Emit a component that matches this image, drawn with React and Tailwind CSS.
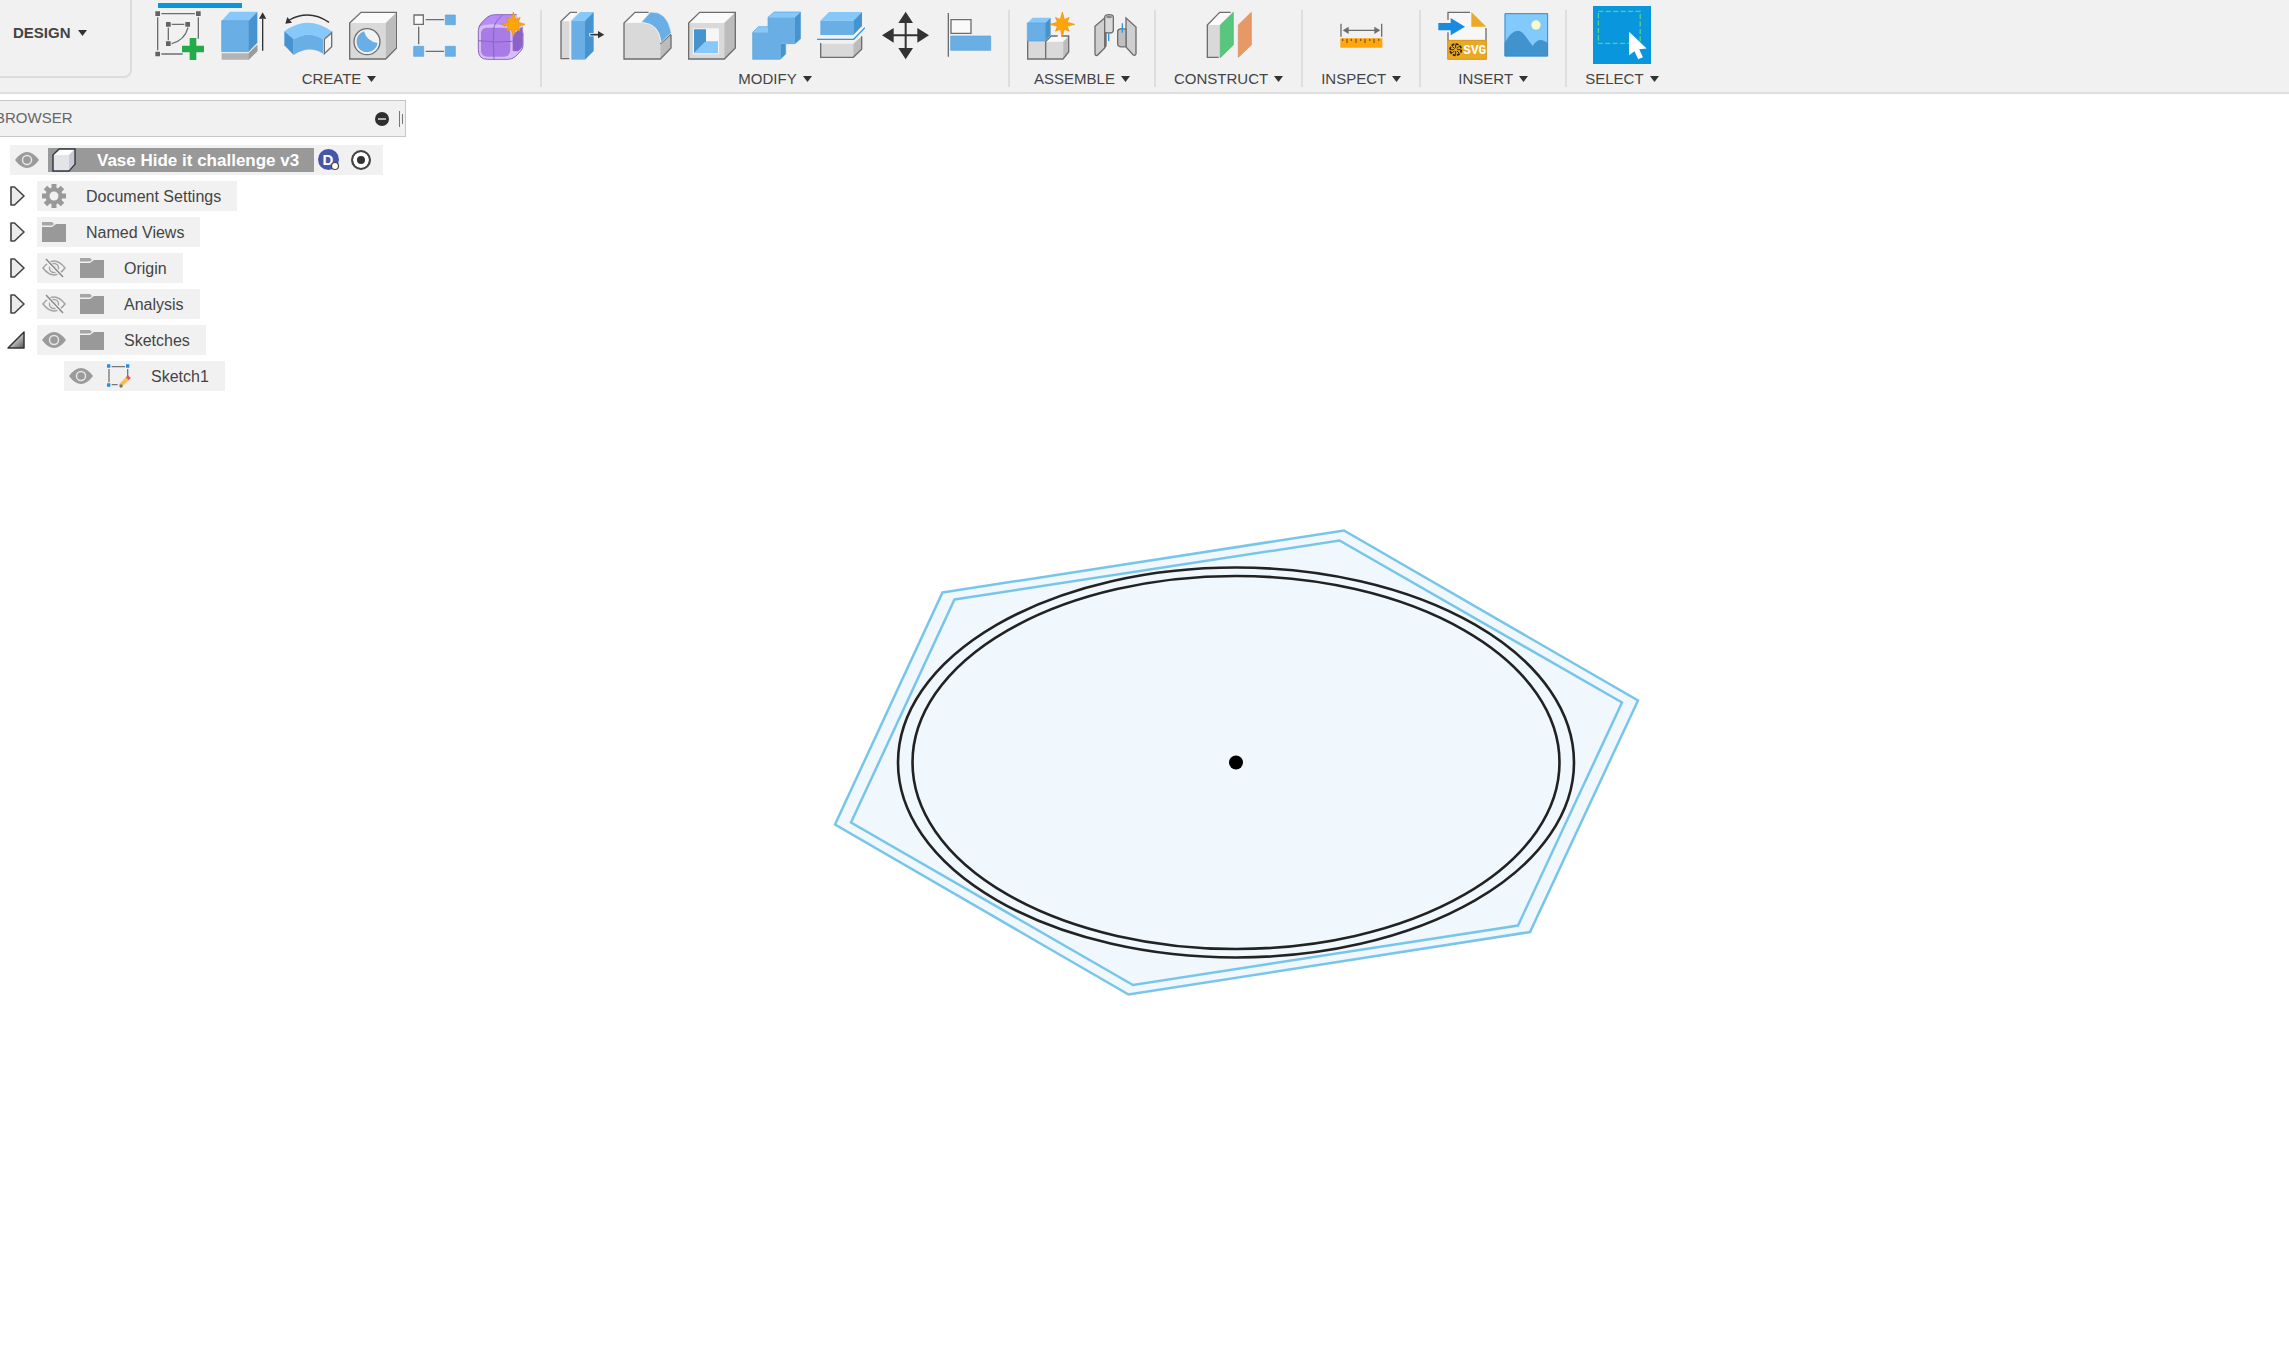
import React, { useState } from 'react';
import clsx from 'clsx';

const INK = '#6e6e6e';
const BLUE = '#69afe5';
const BLUE_LIGHT = '#87c8fb';
const BLUE_DARK = '#4694cf';

function Tool({ label, x, children }) {
  return (
    <button type="button" aria-label={label} className="shrink-0">
      <svg viewBox={`${x} 30 156 150`} width="52" height="50" fill="none" className="block">
        {children}
      </svg>
    </button>
  );
}

function Caret() {
  return (
    <svg viewBox="0 0 9 6" width="9" height="6" fill="#333" className="block">
      <path d="M0 0h9L4.500 6z" />
    </svg>
  );
}

function Group({ name, className, children }) {
  return (
    <div className={clsx('flex flex-col items-center gap-[9px] pt-2.5', className)}>
      <div className="flex h-[50px] items-center gap-3">{children}</div>
      <button type="button" className="flex items-center gap-1.5 text-[15px] leading-5">
        {name} <Caret />
      </button>
    </div>
  );
}

function Separator() {
  return <div className="mt-2.5 h-[77px] w-0.5 shrink-0 bg-[#dedede]" />;
}

function Spark({ cx, cy }) {
  const points = Array.from({ length: 16 }, (_, i) => {
    const r = i % 2 ? 16 : i % 4 ? 29 : 37;
    const a = (i * Math.PI) / 8;
    return `${cx + r * Math.sin(a)},${cy - r * Math.cos(a)}`;
  }).join(' ');
  return <polygon points={points} fill="#ffa50a" stroke="#e09112" strokeWidth="2" />;
}

function CreateTools() {
  return (
    <>
      <Tool label="Create Sketch" x={459}>
        <path d="M484 41h101M473 52v99M484 162h64M595 52v64" stroke={INK} strokeWidth="4" />
        <path d="M515 73h38M505 83v38M564 83q-10 38-49 48" stroke={INK} strokeWidth="4" />
        <path d="M466 34h14v14h-14zM588 34h14v14h-14zM466 155h14v14h-14zM498 66h14v14h-14zM556 66h14v14h-14zM498 124h14v14h-14z" fill="#636363" />
        <path d="M569 114h20v23h23v20h-23v23h-20v-23h-23v-20h23z" fill="#23ab4b" />
      </Tool>
      <Tool label="Extrude" x={651}>
        <path d="M665 160h81l26-26v20l-26 25h-81z" fill="#b3b3b3" />
        <path d="M746 160l26-26v20l-26 25z" fill="#9a9a9a" />
        <path d="M665 62l25-27h82l-26 27z" fill={BLUE_LIGHT} />
        <path d="M665 62h81v93h-81z" fill={BLUE} stroke="#5aa2da" strokeWidth="2" />
        <path d="M746 62l26-27v93l-26 27z" fill={BLUE_DARK} />
        <path d="M788 56v96" stroke="#333" strokeWidth="4" />
        <path d="M788 37l11 19h-22z" fill="#333" />
      </Tool>
      <Tool label="Revolve" x={33}>
        <path d="M177 67Q118 27 58 60" stroke="#333" strokeWidth="4" />
        <path d="M46 71l6-20 14 17z" fill="#333" />
        <path d="M43 94Q113 42 187 95l-28 23q-42-27-88 0z" fill={BLUE_LIGHT} />
        <path d="M43 94l28 24v47l-28-29z" fill={BLUE_DARK} />
        <path d="M71 118q46-27 88 0v43q-42-27-88 4z" fill={BLUE} />
        <path d="M163 118l22-20v42l-22 21z" fill="#f5f5f5" stroke={INK} strokeWidth="4" />
      </Tool>
      <Tool label="Hole" x={225}>
        <path d="M239 69l34-32h107l-33 32z" fill="#fafafa" />
        <path d="M239 69h108v108H239z" fill="#d9d9d9" />
        <path d="M347 69l33-32v107l-33 33z" fill="#bcbcbc" />
        <path d="M239 69l34-32h107v107l-33 33H239z" stroke={INK} strokeWidth="4" />
        <circle cx="291" cy="125" r="39" fill="#f3f3f3" stroke={INK} strokeWidth="4" />
        <path d="M282 94a32 32 0 1 0 41 35q-32-4-41-35z" fill={BLUE} />
      </Tool>
      <Tool label="Rectangular Pattern" x={417}>
        <path d="M467 59h55M446 80v53M467 154h55" stroke={INK} strokeWidth="4" />
        <path d="M432 45h28v28h-28z" fill="#fafafa" stroke={INK} strokeWidth="4" />
        <path d="M526 45h30v29h-30zM431 139h30v30h-30zM526 139h30v30h-30z" fill={BLUE} stroke="#5aa2da" strokeWidth="2" />
      </Tool>
      <Tool label="Create Form" x={609}>
        <path d="M625 92q0-15 12-26l13-13q11-9 24-9h66l19 54v39q0 9-7 16l-16 17q-9 8-23 8h-61q-27 0-27-29z" fill="#d5bdf8" />
        <path d="M626 82q2-9 11-17l14-13q9-7 22-7h55l-24 35q-11-8-34-7-33 0-44 9z" fill="#b78cf5" />
        <path d="M633 101q0-18 18-18h50q20 0 20 18v47q0 22-22 22h-46q-20 0-20-20z" fill="#a87be6" />
        <path d="M728 105l30-26v55q-2 12-15 20l-15-1z" fill="#8c62c9" />
        <path d="M625 92q0-15 12-26l13-13q11-9 24-9h66M759 98v39q0 9-7 16l-16 17q-9 8-23 8h-61q-27 0-27-29V92M672 178q-4-50 0-98 4-18 26-35M625 122q50 7 102 2 18-5 32-20" stroke="#8a65bd" strokeWidth="3" />
        <Spark cx={730} cy={73} />
      </Tool>
    </>
  );
}

function ModifyTools() {
  return (
    <>
      <Tool label="Press Pull" x={51}>
        <path d="M63 64l28-27h22L88 62v114H63z" fill="#d9d9d9" />
        <path d="M63 64l28-27h22L88 64z" fill="#fafafa" />
        <path d="M111 37H91L63 64v112h25" stroke={INK} strokeWidth="4" />
        <path d="M94 62l26-26h41l-26 26z" fill={BLUE_LIGHT} />
        <path d="M94 62h41v117H94z" fill={BLUE} />
        <path d="M135 62l26-26v117l-26 26z" fill={BLUE_DARK} />
        <path d="M148 104h28" stroke="#f1f1f1" strokeWidth="10" />
        <path d="M151 104h28" stroke="#333" strokeWidth="5" />
        <path d="M193 104l-19-11v22z" fill="#333" />
      </Tool>
      <Tool label="Fillet" x={243}>
        <path d="M252 69l33-32h46l-27 30z" fill="#fafafa" />
        <path d="M252 69h50q58 0 59 62v46H252z" fill="#d9d9d9" />
        <path d="M361 131l32-29v42l-32 33z" fill="#bcbcbc" />
        <path d="M326 37h-41l-33 32v108h109l32-33v-39M361 131l32-29" stroke={INK} strokeWidth="4" />
        <path d="M304 67l27-31q50-4 63 62l-31 30q-4-58-59-61z" fill={BLUE} stroke="#f3f3f3" strokeWidth="2" />
      </Tool>
      <Tool label="Shell" x={435}>
        <path d="M446 69l33-32h107l-33 32z" fill="#fafafa" />
        <path d="M446 69h107v108H446z" fill="#d9d9d9" />
        <path d="M553 69l33-32v107l-33 33z" fill="#bcbcbc" />
        <path d="M446 69l33-32h107v107l-33 33H446z" stroke={INK} strokeWidth="4" />
        <path d="M459 85h78v78h-78z" fill="#f6f6f6" />
        <path d="M462 88h36v36l-36 36z" fill={BLUE_DARK} />
        <path d="M462 160l36-36h36v36z" fill={BLUE_LIGHT} />
      </Tool>
      <Tool label="Combine" x={627}>
        <path d="M638 97l17-17h31l-2 17zM684 52l18-16h80l-17 16z" fill={BLUE_LIGHT} />
        <path d="M638 97h46V52h81v79h-44v47h-83z" fill={BLUE} />
        <path d="M765 52l17-16v80l-17 15zM721 131h16v31l-16 16z" fill={BLUE_DARK} />
        <path d="M638 97l17-17h29V52l18-16h80v80l-17 15h-28v31l-16 16h-83z" stroke="#5aa2da" strokeWidth="2" />
      </Tool>
      <Tool label="Split Body" x={129}>
        <path d="M151 62l26-26h99l-26 26z" fill={BLUE_LIGHT} />
        <path d="M151 62h99v43h-99z" fill={BLUE} />
        <path d="M250 62l26-26v42l-26 27z" fill={BLUE_DARK} />
        <path d="M141 118h110l34-35" stroke="#2b97e8" strokeWidth="4" />
        <path d="M152 131h98v41h-98z" fill="#d9d9d9" />
        <path d="M250 131l25-22v39l-25 24z" fill="#bcbcbc" />
        <path d="M152 129v43h98l25-24v-39" stroke={INK} strokeWidth="4" />
      </Tool>
      <Tool label="Move/Copy" x={321}>
        <path d="M407 60v94M362 106h90" stroke="#333" strokeWidth="6" />
        <path d="M407 35l22 34h-44zM407 178l22-34h-44zM336 106l35-22v44zM477 106l-35-22v44z" fill="#333" />
      </Tool>
      <Tool label="Align" x={513}>
        <path d="M535 39v131" stroke={INK} strokeWidth="4" />
        <path d="M543 59h60v41h-60z" fill="#fafafa" stroke={INK} strokeWidth="4" />
        <path d="M542 108h120v43H542z" fill={BLUE} stroke="#5aa2da" strokeWidth="2" />
      </Tool>
    </>
  );
}

function AssembleTools() {
  return (
    <>
      <Tool label="New Component" x={72}>
        <path d="M83 122h54v55H83z" fill="#d9d9d9" />
        <path d="M137 125l16-17h53v48l-17 21h-52z" fill="#d9d9d9" />
        <path d="M137 125l16-17h53l-16 17z" fill="#fafafa" />
        <path d="M190 125l16-17v48l-16 21z" fill="#bcbcbc" />
        <path d="M83 122v55h106l17-21v-48h-22M137 177v-52l16-17h20" stroke={INK} strokeWidth="4" />
        <path d="M82 69l16-16h54l-16 16z" fill={BLUE_LIGHT} />
        <path d="M82 69h54v54H82z" fill={BLUE} stroke="#5aa2da" strokeWidth="2" />
        <path d="M136 69l16-16v52l-16 18z" fill={BLUE_DARK} />
        <Spark cx={187} cy={73} />
      </Tool>
      <Tool label="Joint" x={264}>
        <path d="M285 79l29-25v90l-22 22q-7 2-7-6z" fill="#cfcfcf" stroke={INK} strokeWidth="4" />
        <path d="M314 51q1-7 13-7 13 0 13 8v40q-2 8-13 7l-9-1v40l-4 4z" fill="#d9d9d9" stroke={INK} strokeWidth="4" />
        <ellipse cx="327" cy="51" rx="9" ry="4" fill="#888" />
        <path d="M326 101v22" stroke="#2b97e8" strokeWidth="4" />
        <path d="M378 54l30 27v80q-3 8-9 3l-21-23z" fill="#cfcfcf" stroke={INK} strokeWidth="4" />
        <path d="M353 93q2-7 13-7l12 2v52q-24 3-25-7z" fill="#bfbfbf" stroke={INK} strokeWidth="4" />
        <path d="M367 70v28" stroke="#2b97e8" strokeWidth="4" />
      </Tool>
    </>
  );
}

function SelectTool() {
  return (
    <button type="button" aria-label="Select" className="shrink-0 bg-[#0a96dc]">
      <svg viewBox="886 21 172 172" width="58" height="58" fill="none" className="block">
        <rect x="902" y="37" width="124" height="95" stroke="#58d089" strokeWidth="4" strokeDasharray="15 7" />
        <path d="M993 97v70l16-12 11 24 14-6-11-24 22-2z" fill="#fff" />
      </svg>
    </button>
  );
}

function Toolbar() {
  return (
    <header className="flex h-[94px] shrink-0 items-start border-b-2 border-[#dfdfdf] bg-[#f1f1f1] text-[#444]">
      <button type="button" className="flex h-[78px] w-[132px] shrink-0 items-center gap-[7px] rounded-br-lg border-r-2 border-b-2 border-[#dcdcdc] pb-2.5 pl-[13px] text-[15px] leading-5 font-bold">
        DESIGN <Caret />
      </button>

      <Group name="CREATE" className="relative ml-1.5 px-[15px]">
        <div className="absolute top-[3px] left-5 h-[5px] w-[84px] bg-[#0a96dc]" />
        <CreateTools />
      </Group>
      <Separator />

      <Group name="MODIFY" className="px-[15px]">
        <ModifyTools />
      </Group>
      <Separator />

      <Group name="ASSEMBLE" className="px-3.5">
        <AssembleTools />
      </Group>
      <Separator />

      <Group name="CONSTRUCT" className="px-[18px]">
        <Tool label="Offset Plane" x={610}>
          <path d="M623 75l37-38h39l-37 38v98h-39z" fill="#d9d9d9" />
          <path d="M623 75l37-38h39l-37 38z" fill="#fafafa" />
          <path d="M693 37h-33l-37 38v97h34" stroke={INK} strokeWidth="4" />
          <path d="M662 75l39-38v98l-39 38z" fill="#58c67d" stroke="#4bb56f" strokeWidth="2" />
          <path d="M716 75l39-38v98l-39 37z" fill="#e69865" stroke="#d98b59" strokeWidth="2" />
        </Tool>
      </Group>
      <Separator />

      <Group name="INSPECT" className="px-[18px]">
        <Tool label="Measure" x={110}>
          <path d="M128 71v39M250 71v39M145 91h88" stroke={INK} strokeWidth="4" />
          <path d="M133 91l18-11v22zM246 91l-18-11v22z" fill={INK} />
          <path d="M126 115h126v28H126z" fill="#ffa60d" />
          <path d="M133 116v7M146 116v13M159 116v7M173 116v13M187 116v7M200 116v13M214 116v7M227 116v13M241 116v7" stroke="#8a5d12" strokeWidth="4" />
        </Tool>
      </Group>
      <Separator />

      <Group name="INSERT" className="px-3.5">
        <Tool label="Insert SVG" x={408}>
          <path d="M446 37h71l44 43v41H446z" fill="#f7f7f7" />
          <path d="M447 60V37h66M447 97v24M561 84v38" stroke={INK} strokeWidth="4" />
          <path d="M517 36l45 44h-45z" fill="#eca926" />
          <path d="M418 69h37V54l43 26-43 26V91h-37z" fill="#178ae2" />
          <path d="M446 121h116v57H446z" fill="#eba823" stroke="#d39520" strokeWidth="3" />
          <g stroke="#2b2109" strokeWidth="3">
            <circle cx="470" cy="149" r="17" strokeDasharray="9 4" strokeWidth="5" />
            <path d="M470 134v30M455 149h30M460 139l20 20M480 139l-20 20" />
          </g>
          <circle cx="470" cy="149" r="5" fill="#eba823" />
          <text x="493" y="163" fill="#fff" fontSize="38" fontWeight="bold" fontFamily="'Liberation Mono', monospace">
            SVG
          </text>
        </Tool>
        <Tool label="Canvas" x={600}>
          <path d="M617 40h130v129H617z" fill="#82c9fc" />
          <path d="M617 128q34-58 60-22l24 32q20-32 46-7v38H617z" fill="#4093cd" />
          <circle cx="711" cy="75" r="14" fill="#fcfacb" />
          <path d="M618 41h128v127H618z" stroke="#3b8ac4" strokeWidth="3" />
        </Tool>
      </Group>
      <Separator />

      <Group name="SELECT" className="px-[18px]">
        <SelectTool />
      </Group>
    </header>
  );
}

function Eye({ hidden }) {
  return (
    <svg viewBox="0 0 24 24" width="24" height="24" fill="none" className="block shrink-0">
      {hidden ? (
        <g stroke="#a3a3a3" strokeWidth="1.500">
          <path d="M1 12q11-14 22 0-11 14-22 0z" />
          <circle cx="12" cy="12" r="4.500" />
          <circle cx="12" cy="12" r="1.500" />
          <path d="M4 4l17 17" stroke="#f1f1f1" strokeWidth="4" />
          <path d="M4 3l17 18" stroke="#8a8a8a" />
        </g>
      ) : (
        <>
          <path d="M0 12q12-16 24 0-12 16-24 0z" fill="#9b9b9b" />
          <circle cx="12" cy="12" r="4.500" stroke="#e6e6e6" strokeWidth="1.500" />
        </>
      )}
    </svg>
  );
}

function Folder() {
  return (
    <svg viewBox="0 0 24 24" width="24" height="24" className="block shrink-0">
      <path d="M0 2h10l2 2-2 1.500H0z" fill="#a6a6a6" />
      <path d="M0 7h10l4-3h10v18H0z" fill="#999" />
    </svg>
  );
}

function Gear() {
  return (
    <svg viewBox="-12 -12 24 24" width="24" height="24" fill="#999" className="block shrink-0">
      {[0, 45, 90, 135].map(angle => (
        <rect key={angle} x="-2.500" y="-12" width="5" height="24" transform={`rotate(${angle})`} />
      ))}
      <circle r="8.500" />
      <circle r="4.500" fill="#f1f1f1" />
    </svg>
  );
}

function SketchGlyph() {
  return (
    <svg viewBox="318 372 72 72" width="24" height="24" fill="none" className="block shrink-0">
      <path d="M332 380h40M324 387v40M380 387v24M332 434h18" stroke="#777" strokeWidth="4" />
      <path d="M318 373h10v10h-10zM375 373h10v10h-10zM318 430h10v10h-10z" fill="#1e90ea" />
      <path d="M358 437l23-23" stroke="#fbbf49" strokeWidth="12" />
      <path d="M379 416l6-6" stroke="#f04a5a" strokeWidth="12" />
      <circle cx="360" cy="438" r="5" fill="#777" />
    </svg>
  );
}

function Expander({ open, label, onClick }) {
  return (
    <button type="button" aria-label={label} aria-expanded={open} onClick={onClick} className="w-[27px] shrink-0">
      {open ? (
        <svg viewBox="2 0 18 20" width="18" height="20" className="block overflow-visible">
          <defs>
            <linearGradient id="fold" x1="0" y1="0" x2="1" y2="1">
              <stop offset="0.400" stopColor="#d5d5d5" />
              <stop offset="1" stopColor="#555" />
            </linearGradient>
          </defs>
          <path d="M16 2v16H0z" fill="url(#fold)" stroke="#333" strokeWidth="1.500" strokeLinejoin="round" />
        </svg>
      ) : (
        <svg viewBox="0 0 18 20" width="18" height="20" className="block">
          <path d="M1 1h3.500L14 10 4.500 19H1z" fill="#ececec" stroke="#444" strokeWidth="1.600" strokeLinejoin="round" />
        </svg>
      )}
    </button>
  );
}

function Row({ name, icon, visible }) {
  return (
    <div className="flex h-[30px] w-fit items-center bg-[#f1f1f1] pr-4 pl-[5px]">
      {visible !== undefined && (
        <button type="button" aria-label={`Toggle ${name}`} className="mr-3.5">
          <Eye hidden={!visible} />
        </button>
      )}
      {icon}
      <span className="ml-5 pt-0.5 whitespace-nowrap">{name}</span>
    </div>
  );
}

const FOLDERS = [
  { name: 'Document Settings', icon: <Gear /> },
  { name: 'Named Views', icon: <Folder /> },
  { name: 'Origin', icon: <Folder />, visible: false },
  { name: 'Analysis', icon: <Folder />, visible: false },
  { name: 'Sketches', icon: <Folder />, visible: true, items: ['Sketch1'] },
];

function Browser() {
  const [open, setOpen] = useState({ Sketches: true });

  return (
    <aside className="relative w-fit pt-1.5 text-base leading-5 text-[#444]">
      {/* Header runs past the left edge of the window */}
      <div className="-ml-2 flex h-[37px] w-[414px] items-center border border-[#c6c6c6] bg-[#f1f1f1] pr-0.5 pl-0.5">
        <h2 className="flex-1 pb-0.5 text-[15px] text-[#666]">BROWSER</h2>
        <button type="button" aria-label="Collapse browser" className="mr-2.5">
          <svg viewBox="0 0 14 14" width="14" height="14" className="block">
            <circle cx="7" cy="7" r="7" fill="#2e2e2e" />
            <path d="M3 7h8" stroke="#ddd" strokeWidth="1.500" />
          </svg>
        </button>
        <div className="flex items-center gap-0.5">
          <div className="h-4 w-px bg-[#777]" />
          <div className="h-2.5 w-px bg-[#777]" />
        </div>
      </div>

      {/* Root component */}
      <div className="mt-2 ml-2.5 flex h-[30px] w-fit items-center bg-[#f1f1f1] pr-3 pl-[5px]">
        <button type="button" aria-label="Toggle component" className="mr-[9px]">
          <Eye />
        </button>
        <div className="flex h-6 items-center bg-[#999] pr-[15px] pl-1 text-[17px] font-bold text-white">
          <svg viewBox="0 0 24 24" width="24" height="24" className="block shrink-0">
            <path d="M1 7l6-6h16v15l-6 7H1z" fill="#e3e4e8" stroke="#333a4a" strokeWidth="1.500" />
            <path d="M2 7l6-5h14l-5 5z" fill="#fff" />
            <path d="M17 7l5-5v14l-5 6z" fill="#c9cad2" />
          </svg>
          <span className="ml-[21px] pt-0.5 whitespace-nowrap">Vase Hide it challenge v3</span>
        </div>
        <svg viewBox="0 0 22 22" width="22" height="22" className="ml-1 block">
          <circle cx="10.500" cy="10.500" r="10.500" fill="#4657ab" />
          <text x="10" y="16" textAnchor="middle" fill="#fff" fontSize="15" fontWeight="bold" fontFamily="'Liberation Sans', sans-serif">
            D
          </text>
          <circle cx="17" cy="17" r="3.500" fill="#fff" stroke="#444" strokeWidth="1.200" />
        </svg>
        <input
          type="radio"
          defaultChecked
          aria-label="Activate component"
          className="ml-[11px] size-5 appearance-none rounded-full border-2 border-[#444] bg-[#333] shadow-[inset_0_0_0_4px_#fff]"
        />
      </div>

      {/* Folders */}
      <ul>
        {FOLDERS.map(({ items = [], ...folder }) => (
          <li key={folder.name}>
            <div className="mt-1.5 flex items-center pl-2.5">
              <Expander
                open={!!open[folder.name]}
                label={`Expand ${folder.name}`}
                onClick={() => setOpen({ ...open, [folder.name]: !open[folder.name] })}
              />
              <Row {...folder} />
            </div>
            {open[folder.name] && items.map(item => (
              <div key={item} className="mt-1.5 pl-16">
                <Row name={item} icon={<SketchGlyph />} visible />
              </div>
            ))}
          </li>
        ))}
      </ul>
    </aside>
  );
}

function Sketch() {
  return (
    <svg viewBox="0 94 2289 1254" className="absolute inset-0 size-full" fill="none">
      <g stroke="#78c5ea" strokeWidth="2.500">
        <path d="M942.500 592.500L1344 530.500 1638 700.500 1530 932 1128.500 994.500 835 824.500z" fill="#f0f8fe" />
        <path d="M954.500 599.500L1339.500 540.500 1622 702.500 1518 925.500 1133 985 851 822.500z" />
      </g>
      <g stroke="#222" strokeWidth="2.600">
        <ellipse cx="1236" cy="762.500" rx="338" ry="195" />
        <ellipse cx="1236" cy="762.500" rx="323.500" ry="186.500" />
      </g>
      <circle cx="1236" cy="762.500" r="7" fill="#000" />
    </svg>
  );
}

export default function App() {
  return (
    <div className="flex min-h-screen flex-col overflow-hidden bg-white font-['Liberation_Sans',Arial,sans-serif]">
      <Toolbar />
      <main className="relative flex-1">
        <Sketch />
        <Browser />
      </main>
    </div>
  );
}
